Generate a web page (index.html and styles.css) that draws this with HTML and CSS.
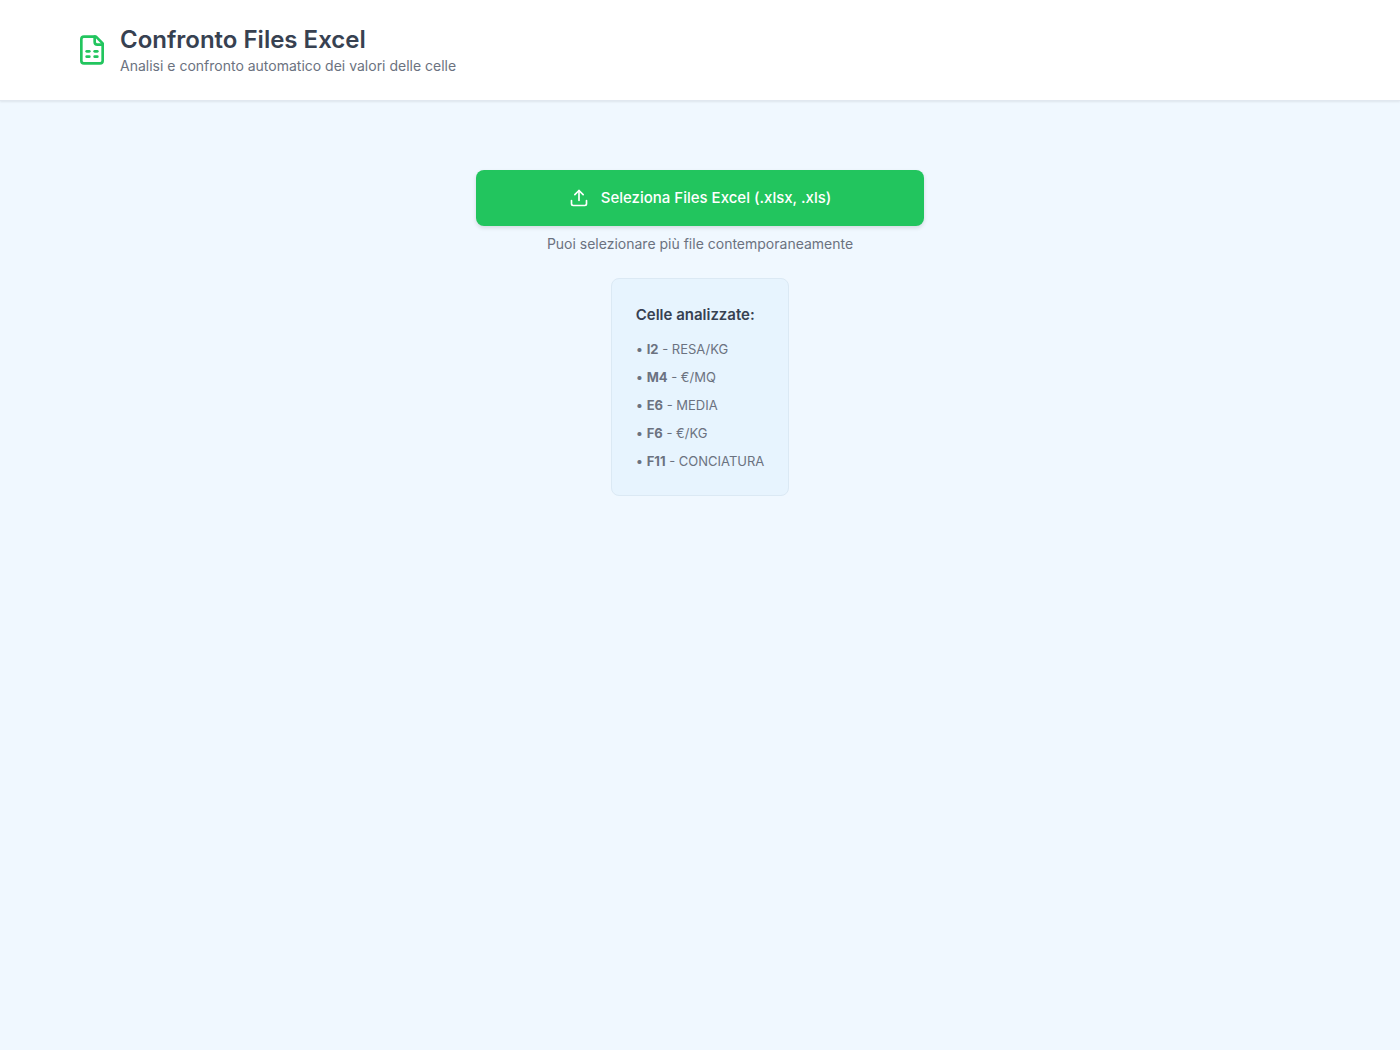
FILE: index.html
```html
<!DOCTYPE html>
<html lang="it">
<head>
    <meta charset="UTF-8">
    <meta name="viewport" content="width=device-width, initial-scale=1.0">
    <title>Confronto Files Excel</title>
    <link rel="stylesheet" href="styles.css">
</head>
<body>
    <header class="header">
        <div class="container header-content">
            <svg class="logo" viewBox="0 0 24 24" aria-hidden="true">
                <path d="M15 2H6a2 2 0 0 0-2 2v16a2 2 0 0 0 2 2h12a2 2 0 0 0 2-2V7Z"/>
                <path d="M14 2v4a2 2 0 0 0 2 2h4"/>
                <path d="M8 13h2"/>
                <path d="M14 13h2"/>
                <path d="M8 17h2"/>
                <path d="M14 17h2"/>
            </svg>
            <div>
                <h1>Confronto Files Excel</h1>
                <p class="subtitle">Analisi e confronto automatico dei valori delle celle</p>
            </div>
        </div>
    </header>

    <main class="container main">
        <button type="button" class="upload-button" id="uploadButton">
            <svg class="upload-icon" viewBox="0 0 24 24" aria-hidden="true">
                <path d="M21 15v4a2 2 0 0 1-2 2H5a2 2 0 0 1-2-2v-4"/>
                <path d="M17 8l-5-5-5 5"/>
                <path d="M12 3v12"/>
            </svg>
            Seleziona Files Excel (.xlsx, .xls)
        </button>
        <input type="file" id="fileInput" accept=".xlsx,.xls" aria-label="Files Excel" multiple hidden>
        <p class="hint">Puoi selezionare più file contemporaneamente</p>

        <section class="card">
            <h2>Celle analizzate:</h2>
            <ul class="cell-list">
                <li><strong>I2</strong> - RESA/KG</li>
                <li><strong>M4</strong> - €/MQ</li>
                <li><strong>E6</strong> - MEDIA</li>
                <li><strong>F6</strong> - €/KG</li>
                <li><strong>F11</strong> - CONCIATURA</li>
            </ul>
        </section>
    </main>

    <script>
        document.getElementById("uploadButton").addEventListener("click", function() {
            document.getElementById("fileInput").click();
        });
    </script>
</body>
</html>
```

FILE: styles.css
```css
* {
    box-sizing: border-box;
}
body {
    margin: 0;
    min-height: 100vh;
    font-family: Inter, "Liberation Sans", sans-serif;
    font-size: 14px;
    line-height: 20px;
    color: #6b7280;
    background-color: #f0f8ff;
}
h1, h2, p, ul {
    margin: 0;
    padding: 0;
}
h1 {
    font-size: 24px;
    line-height: 32px;
    font-weight: 600;
    color: #374151;
}
h2 {
    margin-bottom: 12px;
    font-size: 15px;
    line-height: 24px;
    font-weight: 600;
    color: #374151;
}
svg {
    fill: none;
    stroke: currentColor;
    stroke-width: 2;
    stroke-linecap: round;
    stroke-linejoin: round;
    flex-shrink: 0;
}
.container {
    max-width: 1280px;
    margin: 0 auto;
    padding: 0 16px;
}
.header {
    padding: 24px 0;
    background-color: #fff;
    border-bottom: 1px solid #e1e8f0;
    box-shadow: 0 1px 2px rgba(0,0,0,0.08);
}
.header-content {
    display: flex;
    align-items: center;
    gap: 12px;
}
.logo {
    width: 32px;
    height: 32px;
    color: #22c55e;
}
.main {
    display: flex;
    flex-direction: column;
    align-items: center;
    padding-top: 69px;
    padding-bottom: 32px;
}
.upload-button {
    display: flex;
    align-items: center;
    justify-content: center;
    gap: 12px;
    width: 100%;
    max-width: 448px;
    padding: 16px 24px;
    font-family: inherit;
    font-size: 15px;
    line-height: 24px;
    font-weight: 500;
    color: #fff;
    background-color: #22c55e;
    border: none;
    border-radius: 8px;
    box-shadow: 0 2px 4px rgba(0,0,0,0.12);
    cursor: pointer;
}
.upload-button:hover {
    background-color: #16a34a;
}
.upload-icon {
    width: 20px;
    height: 20px;
}
.hint {
    margin-top: 8px;
}
.card {
    margin-top: 24px;
    padding: 24px;
    background-color: #e7f4fe;
    border: 1px solid #dbe9f4;
    border-radius: 8px;
}
.cell-list {
    display: flex;
    flex-direction: column;
    gap: 8px;
    font-size: 13px;
    list-style: none;
}
.cell-list li::before {
    content: "• ";
}
```
